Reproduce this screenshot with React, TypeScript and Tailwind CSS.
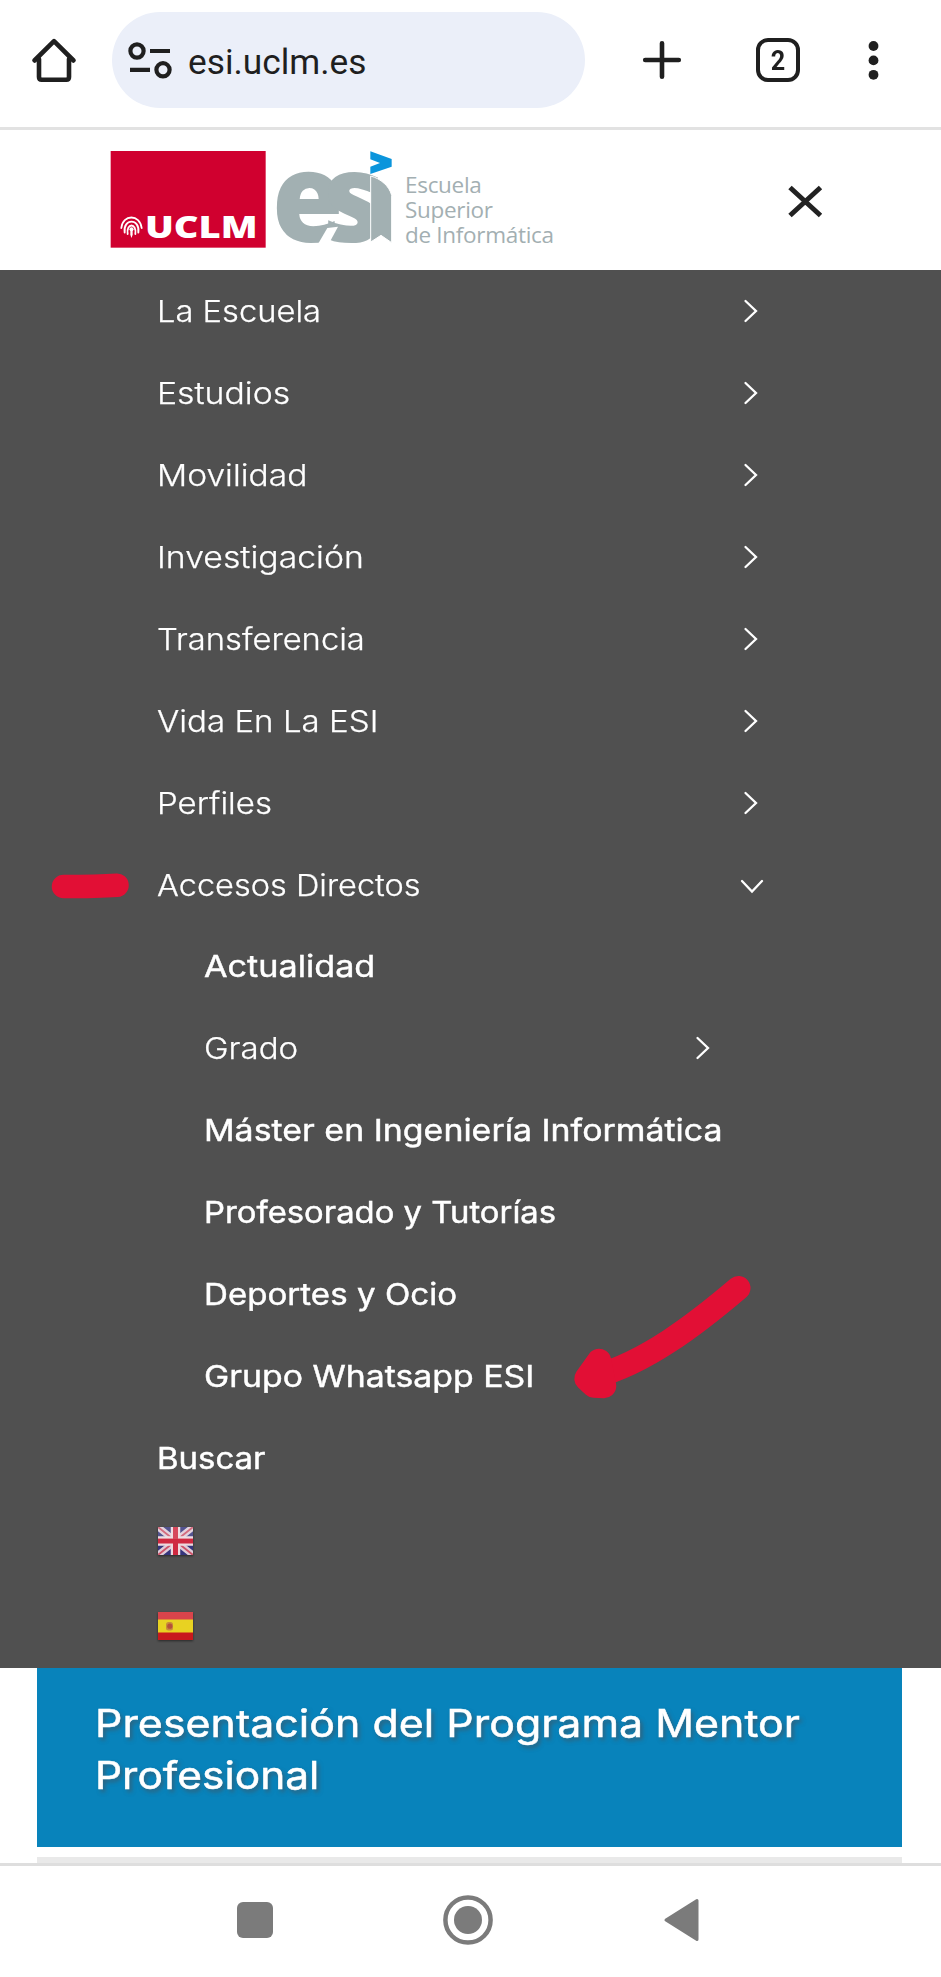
type Arrow = "right" | "down" | "none";

interface MenuItem {
  label: string;
  arrow: Arrow;
  nested?: boolean;
  stretch: string;
}

const items: MenuItem[] = [
  { label: "La Escuela", arrow: "right", stretch: "scale-x-[1.09]" },
  { label: "Estudios", arrow: "right", stretch: "scale-x-[1.126]" },
  { label: "Movilidad", arrow: "right", stretch: "scale-x-[1.118]" },
  { label: "Investigación", arrow: "right", stretch: "scale-x-[1.126]" },
  { label: "Transferencia", arrow: "right", stretch: "scale-x-[1.092]" },
  { label: "Vida En La ESI", arrow: "right", stretch: "scale-x-[1.103]" },
  { label: "Perfiles", arrow: "right", stretch: "scale-x-[1.1]" },
  { label: "Accesos Directos", arrow: "down", stretch: "scale-x-[1.084]" },
  { label: "Actualidad", arrow: "none", nested: true, stretch: "scale-x-[1.139]" },
  { label: "Grado", arrow: "right", nested: true, stretch: "scale-x-[1.103]" },
  { label: "Máster en Ingeniería Informática", arrow: "none", nested: true, stretch: "scale-x-[1.13]" },
  { label: "Profesorado y Tutorías", arrow: "none", nested: true, stretch: "scale-x-[1.094]" },
  { label: "Deportes y Ocio", arrow: "none", nested: true, stretch: "scale-x-[1.104]" },
  { label: "Grupo Whatsapp ESI", arrow: "none", nested: true, stretch: "scale-x-[1.127]" },
  { label: "Buscar", arrow: "none", stretch: "scale-x-[1.098]" },
];

function BrowserBar() {
  return (
    <div className="flex h-[130px] items-start border-b-[3px] border-[#e2e2e2] bg-white pt-3 text-[#1f1f1f]">
      <svg className="ml-[30px] mt-6 size-12" viewBox="0 0 48 48" fill="none" stroke="currentColor" strokeWidth="4.6" strokeLinejoin="round" strokeLinecap="round">
        <path d="M4.5 24.5 24 5.2l19.500 19.300" />
        <path d="M9 23v18q0 2.700 2.700 2.700h24.600q2.700 0 2.700-2.700V23" />
      </svg>
      <div className="ml-[34px] flex h-24 w-[473px] items-center rounded-full bg-[#ebeff9]">
        <svg className="ml-4 h-[40px] w-[46px]" viewBox="0 0 46 40" fill="none" stroke="currentColor" strokeWidth="4.2">
          <circle cx="9" cy="11" r="6.600" />
          <path d="M22 11h20M2 29.800h20" />
          <circle cx="35" cy="29.800" r="6.600" />
        </svg>
        <span className="ml-[14px] mt-[5px] font-['Roboto',sans-serif] text-[35.3px] leading-none">esi.uclm.es</span>
      </div>
      <svg className="ml-[55px] mt-[26px] size-11" viewBox="0 0 44 44" fill="none" stroke="currentColor" strokeWidth="4.600" strokeLinecap="round">
        <path d="M22 5.200v33.600M5.200 22h33.600" />
      </svg>
      <div className="ml-[72px] mt-[26px] flex h-[44px] w-[44px] items-center justify-center rounded-[12px] border-[4.500px] border-[#1f1f1f] pt-0.5 font-['Roboto',sans-serif] text-[28px] font-bold leading-none">
        <span className="inline-block scale-x-90">2</span>
      </div>
      <svg className="ml-[62px] mt-[26px] h-11 w-6" viewBox="0 0 24 44" fill="currentColor">
        <circle cx="11.500" cy="8" r="4.900" />
        <circle cx="11.500" cy="22.400" r="4.900" />
        <circle cx="11.500" cy="36.800" r="4.900" />
      </svg>
    </div>
  );
}

function Logo() {
  return (
    <svg className="h-[140px] w-[312px] overflow-visible" viewBox="0 0 936 420">
      <rect x="62" y="63" width="465" height="290" fill="#d0002f" />
      <g fill="none" stroke="#fff" strokeWidth="5.500" strokeLinecap="round">
        <path d="M94 294C98 252 150 252 155 294" />
        <path d="M104 308C98 264 151 264 145 308" />
        <path d="M113 312C108 278 141 278 136 312" />
      </g>
      <circle cx="124.500" cy="298" r="6" fill="#fff" />
      <path d="M121 300h7v14l-3.500 10-3.500-10z" fill="#fff" />
      <text x="165" y="323" textLength="338" lengthAdjust="spacingAndGlyphs" fill="#fff" fontFamily="'Open Sans', sans-serif" fontWeight="800" fontSize="90">
        UCLM
      </text>
      <text transform="translate(546 335) scale(0.93 1)" fill="#a2b0b2" fontFamily="'Open Sans', sans-serif" fontWeight="800" fontSize="374" letterSpacing="-66">
        es
      </text>
      <path d="M712 294L684 342H716L744 290Z" fill="#fff" />
      <path d="M842 138C872 146 898 168 905 196V338L873 316L842 336Z" fill="#a2b0b2" stroke="#fff" strokeWidth="3" />
      <path d="M841 64L905 87V110L841 132V110L870 99L841 88Z" fill="#0b95dc" />
    </svg>
  );
}

function SiteHeader() {
  return (
    <header className="flex h-[140px] items-start bg-white pl-[90px]">
      <Logo />
      <div className="ml-[3px] mt-[42px] w-[200px] whitespace-nowrap font-['Open_Sans',sans-serif] text-[22.5px] leading-[25px] tracking-[-0.3px] text-[#a3afb2]">
        <div>Escuela</div>
        <div>Superior</div>
        <div>de Informática</div>
      </div>
      <svg className="ml-[179px] mt-[54px] h-9 w-11" viewBox="0 0 44 36" fill="none" stroke="#222" strokeWidth="5">
        <path d="M6 3.500 36.500 31.500M36.500 3.500 6 31.500" />
      </svg>
    </header>
  );
}

function Chevron({ down = false }: { down?: boolean }) {
  return (
    <svg className="mr-[176px] size-[26px]" viewBox="0 0 26 26" fill="none" stroke="#fff" strokeWidth="2.300" strokeLinecap="round">
      {down ? <path d="M3 9 13 19.500 23 9" /> : <path d="M6.500 3 17 13 6.500 23" />}
    </svg>
  );
}

function MenuRow({ item }: { item: MenuItem }) {
  const leaf = item.arrow === "none";
  return (
    <div className={item.nested ? "flex h-[81.88px] items-center justify-between pl-[204px] pr-[48px]" : "flex h-[81.88px] items-center justify-between pl-[156.5px]"}>
      <span
        className={[
          "inline-block origin-left whitespace-nowrap text-[30px] leading-none text-white",
          item.stretch,
          leaf ? "font-normal [-webkit-text-stroke:0.45px_white]" : "font-light [-webkit-text-stroke:0.25px_white]",
        ].join(" ")}
      >
        {item.label}
      </span>
      {!leaf && <Chevron down={item.arrow === "down"} />}
    </div>
  );
}

function FlagUk() {
  return (
    <svg className="h-7 w-[35px] drop-shadow-[0_1px_1px_rgba(0,0,0,0.5)]" viewBox="0 0 35 28">
      <rect width="35" height="28" fill="#35357c" />
      <path d="M0 0 35 28M35 0 0 28" stroke="#dfccd8" strokeWidth="6.500" />
      <path d="M0 0 35 28M35 0 0 28" stroke="#cc5369" strokeWidth="1.800" />
      <path d="M17.500 0V28M0 14H35" stroke="#ecd9de" strokeWidth="9.500" />
      <path d="M17.500 0V28M0 14H35" stroke="#cf2940" strokeWidth="5" />
      <rect width="35" height="12" fill="#fff" opacity="0.150" />
    </svg>
  );
}

function FlagEs() {
  return (
    <svg className="h-7 w-[35px] drop-shadow-[0_1px_1px_rgba(0,0,0,0.5)]" viewBox="0 0 35 28">
      <rect width="35" height="28" fill="#c8191d" />
      <rect width="35" height="8" fill="#d8444b" />
      <rect y="7.500" width="35" height="13" fill="#e8d222" />
      <rect x="8" y="10" width="7" height="8.500" rx="2.500" fill="#c88a3c" />
      <circle cx="11.800" cy="14.200" r="2.600" fill="#b5503a" />
    </svg>
  );
}

function Annotations() {
  return (
    <svg className="pointer-events-none absolute left-0 top-0 h-[1398px] w-[941px]" viewBox="0 270 941 1398" fill="none" stroke="#e20f35" strokeLinecap="round" strokeLinejoin="round">
      <path d="M63.500 886.500C85 886.500 98 886.500 117 885.200" strokeWidth="23.500" />
      <path d="M738.500 1288C695 1325 645 1363 596 1376" strokeWidth="24" />
      <path d="M599 1361 586.500 1378.500 594 1385.500 604 1386Z" strokeWidth="24.500" fill="#e20f35" />
    </svg>
  );
}

function Menu() {
  return (
    <nav className="relative h-[1398px] bg-[#505050] pt-[0.5px] font-['Inter',sans-serif]">
      {items.map((item) => (
        <MenuRow key={item.label} item={item} />
      ))}
      <div className="flex h-[85px] items-center pl-[158px]">
        <FlagUk />
      </div>
      <div className="flex h-[84px] items-center pl-[158px]">
        <FlagEs />
      </div>
      <Annotations />
    </nav>
  );
}

function Banner() {
  return (
    <section className="h-[195px] bg-white pl-[37px] pr-[39px]">
      <div className="h-[179px] bg-[#0883bb] pl-[58px] pt-[29.5px] font-['Inter',sans-serif] text-[37.5px] leading-[52.4px] text-white [-webkit-text-stroke:0.5px_white] [text-shadow:2px_3px_4px_rgba(70,80,90,0.7)]">
        <div className="w-fit origin-left scale-x-[1.145] whitespace-nowrap">Presentación del Programa Mentor</div>
        <div className="w-fit origin-left scale-x-[1.132] whitespace-nowrap">Profesional</div>
      </div>
      <div className="mt-[10px] h-[6px] bg-[#e9e9e9]" />
    </section>
  );
}

function SystemBar() {
  return (
    <div className="flex h-[114px] items-start border-t-[3px] border-[#dedede] bg-white pt-[29px] text-[#7b7b7b]">
      <div className="ml-[237px] mt-[7px] size-9 rounded-[6px] bg-[#7b7b7b]" />
      <svg className="ml-[170px] size-[50px]" viewBox="0 0 50 50">
        <circle cx="25" cy="25" r="22.600" fill="none" stroke="currentColor" strokeWidth="4.500" />
        <circle cx="25" cy="25" r="14" fill="currentColor" />
      </svg>
      <svg className="ml-[170px] mt-[3px] h-11 w-9" viewBox="0 0 36 44" fill="currentColor" stroke="currentColor" strokeWidth="3" strokeLinejoin="round">
        <path d="M3 22 34 2.500V41.500Z" />
      </svg>
    </div>
  );
}

export default function App() {
  return (
    <div className="h-[1977px] w-[941px] overflow-hidden bg-white">
      <BrowserBar />
      <SiteHeader />
      <Menu />
      <Banner />
      <SystemBar />
    </div>
  );
}
